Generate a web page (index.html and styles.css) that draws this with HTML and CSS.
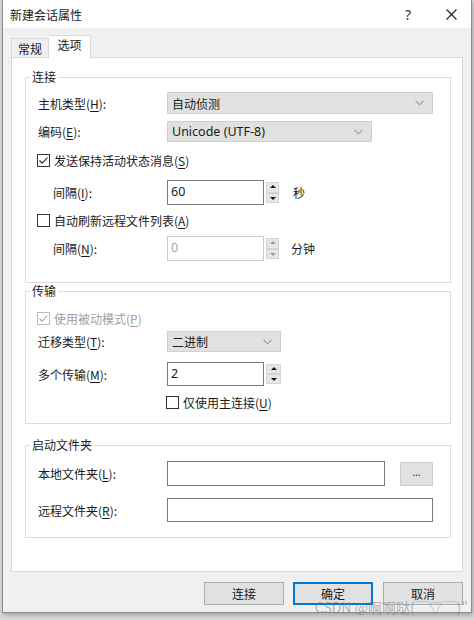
FILE: index.html
```html
<!DOCTYPE html>
<html lang="zh-CN">
<head>
<meta charset="utf-8">
<title>新建会话属性</title>
<link rel="stylesheet" href="styles.css">
</head>
<body>
<div class="dialog">
  <div class="titlebar">
    <span class="title">新建会话属性</span>
    <span class="help">?</span>
    <span class="close"><svg width="11" height="11" viewBox="0 0 11 11"><path d="M0.5 0.5L10.5 10.5M10.5 0.5L0.5 10.5" stroke="#222" stroke-width="1.1" fill="none"/></svg></span>
  </div>
  <div class="body">
    <div class="tabs">
      <div class="tab">常规</div>
      <div class="tab active">选项</div>
    </div>
    <div class="panel">
      <div class="group g1">
        <span class="legend">连接</span>
        <div class="row r-h22">
          <span class="label">主机类型(<u>H</u>):</span>
          <div class="combo w266"><span>自动侦测</span><svg class="chev" width="9" height="6" viewBox="0 0 9 6"><path d="M0.5 0.8L4.5 4.8L8.5 0.8" stroke="#777" fill="none"/></svg></div>
        </div>
        <div class="row r-h21 mt7">
          <span class="label">编码(<u>E</u>):</span>
          <div class="combo w205"><span class="latin">Unicode (UTF-8)</span><svg class="chev" width="9" height="6" viewBox="0 0 9 6"><path d="M0.5 0.8L4.5 4.8L8.5 0.8" stroke="#777" fill="none"/></svg></div>
        </div>
        <div class="row r-h18 mt9">
          <span class="check checked"><svg width="11" height="11" viewBox="0 0 11 11"><path d="M1.5 5.5L4.2 8.2L9.5 2.5" stroke="#222" stroke-width="1.1" fill="none"/></svg></span>
          <span class="clabel">发送保持活动状态消息(<u>S</u>)</span>
        </div>
        <div class="row r-h25 mt11">
          <span class="label sub">间隔(<u>I</u>):</span>
          <div class="spin">
            <div class="edit w97"><span class="latin">60</span></div>
            <div class="arrows">
              <span class="arr up"></span>
              <span class="arr down"></span>
            </div>
          </div>
          <span class="unit">秒</span>
        </div>
        <div class="row r-h18 mt6">
          <span class="check"></span>
          <span class="clabel">自动刷新远程文件列表(<u>A</u>)</span>
        </div>
        <div class="row r-h25 mt7">
          <span class="label sub">间隔(<u>N</u>):</span>
          <div class="spin disabled">
            <div class="edit w97"><span class="latin">0</span></div>
            <div class="arrows">
              <span class="arr up"></span>
              <span class="arr down"></span>
            </div>
          </div>
          <span class="unit unit2">分钟</span>
        </div>
      </div>

      <div class="group g2">
        <span class="legend">传输</span>
        <div class="row r-h18">
          <span class="check checked disabled"><svg width="11" height="11" viewBox="0 0 11 11"><path d="M1.5 5.5L4.2 8.2L9.5 2.5" stroke="#aaa" stroke-width="1.1" fill="none"/></svg></span>
          <span class="clabel dis">使用被动模式(<u>P</u>)</span>
        </div>
        <div class="row r-h21 mt4">
          <span class="label">迁移类型(<u>T</u>):</span>
          <div class="combo w114"><span>二进制</span><svg class="chev" width="9" height="6" viewBox="0 0 9 6"><path d="M0.5 0.8L4.5 4.8L8.5 0.8" stroke="#777" fill="none"/></svg></div>
        </div>
        <div class="row r-h24 mt10">
          <span class="label">多个传输(<u>M</u>):</span>
          <div class="spin">
            <div class="edit w97"><span class="latin">2</span></div>
            <div class="arrows wide">
              <span class="arr up"></span>
              <span class="arr down"></span>
            </div>
          </div>
        </div>
        <div class="row r-h18 mt7 indent">
          <span class="check"></span>
          <span class="clabel">仅使用主连接(<u>U</u>)</span>
        </div>
      </div>

      <div class="group g3">
        <span class="legend">启动文件夹</span>
        <div class="row r-h25">
          <span class="label">本地文件夹(<u>L</u>):</span>
          <div class="edit w218"></div>
          <div class="btn small">...</div>
        </div>
        <div class="row r-h24 mt12">
          <span class="label">远程文件夹(<u>R</u>):</span>
          <div class="edit w266"></div>
        </div>
      </div>
    </div>
    <div class="buttons">
      <div class="btn">连接</div>
      <div class="btn default">确定</div>
      <div class="btn">取消</div>
    </div>
  </div>
  <div class="watermark">CSDN @啊啊哒(￣▽￣)"</div>
</div>
</body>
</html>
```

FILE: styles.css
```css
html, body {
  margin: 0;
  padding: 0;
}
body {
  width: 474px;
  height: 620px;
  background: #d9d9d9;
  font-family: "Noto Sans CJK SC", "Noto Sans", sans-serif;
  font-size: 12px;
  color: #1a1a1a;
  overflow: hidden;
}
.dialog {
  position: relative;
  margin-left: 2px;
  width: 468px;
  height: 612px;
  border: 1px solid #8c8c8c;
  border-top: none;
  background: #f0f0f0;
  box-shadow: 1px 2px 4px rgba(0,0,0,0.25);
  display: flex;
  flex-direction: column;
}
.titlebar {
  height: 28px;
  background: #fff;
  display: flex;
  align-items: center;
  padding-left: 7px;
  flex: none;
}
.title {
  font-size: 12px;
  color: #222;
  flex: 1;
}
.help {
  font-family: "Noto Sans", sans-serif;
  font-size: 14px;
  color: #333;
  margin-right: 35px;
}
.close {
  display: flex;
  margin-right: 14px;
}
.body {
  flex: 1;
  display: flex;
  flex-direction: column;
  padding: 7px 0 0 8px;
}
.tabs {
  display: flex;
  align-items: flex-end;
  height: 22px;
}
.tab {
  height: 19px;
  width: 38px;
  box-sizing: border-box;
  border: 1px solid #d9d9d9;
  border-bottom: none;
  background: #f0f0f0;
  text-align: center;
  line-height: 20px;
  font-size: 12px;
}
.tab.active {
  height: 23px;
  width: 42px;
  background: #fff;
  border-color: #d9d9d9;
  margin-bottom: -1px;
  position: relative;
  z-index: 1;
  line-height: 17px;
  border-left: none;
}
.panel {
  width: 452px;
  height: 515px;
  box-sizing: border-box;
  background: #fff;
  border: 1px solid #d9d9d9;
  padding: 19px 11px 0 13px;
}
.group {
  position: relative;
  border: 1px solid #dcdcdc;
  box-sizing: border-box;
  padding: 14px 0 0 12px;
}
.legend {
  position: absolute;
  top: -9px;
  left: 4px;
  background: #fff;
  padding: 0 2px;
  line-height: 16px;
}
.g1 { height: 206px; }
.g2 { height: 133px; margin-top: 8px; padding-top: 17px; }
.g3 { height: 93px; margin-top: 21px; padding-top: 15px; }
.row {
  display: flex;
  align-items: center;
}
.r-h18 { height: 18px; }
.r-h21 { height: 21px; }
.r-h22 { height: 22px; }
.r-h24 { height: 24px; }
.r-h25 { height: 25px; }
.mt4 { margin-top: 4px; }
.mt6 { margin-top: 6px; }
.mt7 { margin-top: 7px; }
.mt9 { margin-top: 9px; }
.mt10 { margin-top: 10px; }
.mt11 { margin-top: 11px; }
.mt12 { margin-top: 12px; }
.label {
  width: 129px;
  flex: none;
}
.label.sub {
  padding-left: 15px;
  width: 114px;
}
u {
  text-decoration: underline;
  text-underline-offset: 2px;
}
.latin {
  font-family: "Noto Sans", "Noto Sans CJK SC", sans-serif;
  font-size: 12.5px;
}
.combo {
  height: 100%;
  box-sizing: border-box;
  background: #e1e1e1;
  border: 1px solid #d0d0d0;
  display: flex;
  align-items: center;
  justify-content: space-between;
  padding: 0 8px 0 4px;
}
.w266 { width: 266px; }
.w205 { width: 205px; }
.w114 { width: 114px; }
.w97 { width: 97px; }
.w218 { width: 218px; }
.chev { flex: none; }
.check {
  width: 13px;
  height: 13px;
  box-sizing: border-box;
  border: 1px solid #333;
  background: #fff;
  display: flex;
  align-items: center;
  justify-content: center;
  margin-left: -1px;
  flex: none;
}
.check.disabled { border-color: #bcbcbc; }
.clabel { margin-left: 4px; }
.clabel.dis { color: #a0a0a0; }
.indent { padding-left: 129px; }
.edit {
  height: 100%;
  box-sizing: border-box;
  border: 1px solid #7a7a7a;
  background: #fff;
  padding: 2px 3px;
  line-height: 16px;
}
.spin {
  display: flex;
  height: 100%;
}
.arrows {
  width: 15px;
  display: flex;
  flex-direction: column;
  justify-content: space-between;
  padding: 2px 0 2px 2px;
  box-sizing: border-box;
}
.arrows.wide { width: 17px; }
.arr {
  height: 10px;
  background: #e6e6e6;
  border: 1px solid #d4d4d4;
  position: relative;
}
.arr::after {
  content: "";
  position: absolute;
  left: 50%;
  top: 50%;
  margin-left: -3px;
  border-left: 3px solid transparent;
  border-right: 3px solid transparent;
}
.arr.up::after { margin-top: -2px; border-bottom: 3px solid #111; }
.arr.down::after { margin-top: -1px; border-top: 3px solid #111; }
.spin.disabled .edit { border-color: #cccccc; color: #a8a8a8; }
.spin.disabled .arr::after { border-bottom-color: #9a9a9a; border-top-color: #9a9a9a; }
.spin.disabled .arr.up::after { border-top-color: transparent; }
.spin.disabled .arr.down::after { border-bottom-color: transparent; }
.unit { margin-left: 14px; }
.unit2 { margin-left: 12px; }
.btn {
  box-sizing: border-box;
  background: #e1e1e1;
  border: 1px solid #adadad;
  display: flex;
  align-items: center;
  justify-content: center;
  width: 80px;
  height: 23px;
}
.btn.small {
  width: 33px;
  height: 24px;
  margin-left: 15px;
  border-color: #cfcfcf;
  font-family: "Noto Sans", sans-serif;
  font-size: 10px;
  padding-bottom: 3px;
}
.btn.default {
  border: 2px solid #0078d7;
}
.buttons {
  display: flex;
  gap: 10px;
  padding-left: 193px;
  margin-top: 10px;
}
.buttons .btn:nth-child(2) { margin-left: -1px; }
.watermark {
  position: absolute;
  right: 3px;
  bottom: -3px;
  font-size: 14px;
  line-height: 16px;
  color: rgba(120,120,120,0.55);
  white-space: nowrap;
  pointer-events: none;
}
```
